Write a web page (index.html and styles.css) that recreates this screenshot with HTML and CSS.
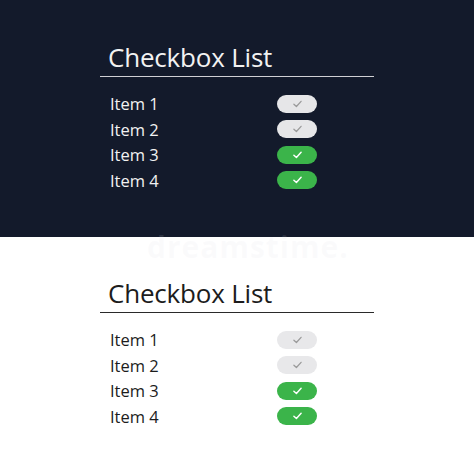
FILE: index.html
```html
<!DOCTYPE html>
<html lang="en">
<head>
    <meta charset="UTF-8">
    <title>Checkbox List</title>
    <link rel="stylesheet" href="styles.css">
</head>
<body>
    <section class="panel dark">
        <div class="card">
            <h1>Checkbox List</h1>
            <ul class="list">
                <li><span>Item 1</span><span class="toggle"><svg viewBox="0 0 10 8"><path d="M1 4.2 L3.8 6.8 L9 1"/></svg></span></li>
                <li><span>Item 2</span><span class="toggle"><svg viewBox="0 0 10 8"><path d="M1 4.2 L3.8 6.8 L9 1"/></svg></span></li>
                <li><span>Item 3</span><span class="toggle on"><svg viewBox="0 0 10 8"><path d="M1 4.2 L3.8 6.8 L9 1"/></svg></span></li>
                <li><span>Item 4</span><span class="toggle on"><svg viewBox="0 0 10 8"><path d="M1 4.2 L3.8 6.8 L9 1"/></svg></span></li>
            </ul>
        </div>
    </section>
    <section class="panel light">
        <div class="card">
            <h1>Checkbox List</h1>
            <ul class="list">
                <li><span>Item 1</span><span class="toggle"><svg viewBox="0 0 10 8"><path d="M1 4.2 L3.8 6.8 L9 1"/></svg></span></li>
                <li><span>Item 2</span><span class="toggle"><svg viewBox="0 0 10 8"><path d="M1 4.2 L3.8 6.8 L9 1"/></svg></span></li>
                <li><span>Item 3</span><span class="toggle on"><svg viewBox="0 0 10 8"><path d="M1 4.2 L3.8 6.8 L9 1"/></svg></span></li>
                <li><span>Item 4</span><span class="toggle on"><svg viewBox="0 0 10 8"><path d="M1 4.2 L3.8 6.8 L9 1"/></svg></span></li>
            </ul>
        </div>
    </section>
    <div class="watermark">dreamstime.</div>
</body>
</html>
```

FILE: styles.css
```css
body { margin: 0; font-family: "Open Sans", "Liberation Sans", sans-serif; background: #fff; position: relative; }
.panel { height: 236px; box-sizing: border-box; padding: 41px 0 0 100px; }
.dark { background: #131a2b; color: #f2f2f2; height: 237px; }
.light { background: #fff; color: #1c1c1c; padding-top: 40px; }
.card { width: 274px; }
h1 { margin: 0; padding: 0 0 3px 8px; font-weight: 400; font-size: 26px; letter-spacing: -0.2px; line-height: 32px; border-bottom: 1.5px solid #d0d0d4; }
.light h1 { border-bottom-color: #2a2a2a; }
.list { list-style: none; margin: 14px 0 0; padding: 0 0 0 10px; }
.list li { display: flex; align-items: center; height: 25.5px; font-size: 16.5px; }
.list li span:first-child { width: 167px; }
.toggle { width: 40px; height: 18px; border-radius: 9px; background: #e6e6e8; display: flex; align-items: center; justify-content: center; }
.light .toggle { background: #e8e8ea; }
.toggle svg { width: 9px; height: 8px; fill: none; stroke: #9a9a9a; stroke-width: 1.4; stroke-linecap: round; stroke-linejoin: round; }
.toggle.on { background: #3bb44a; }
.toggle.on svg { stroke: #fff; stroke-width: 1.6; }
.watermark { position: absolute; left: 147px; top: 226px; font-size: 30px; font-weight: 700; letter-spacing: 1px; color: rgba(220, 220, 225, 0.12); }
```
